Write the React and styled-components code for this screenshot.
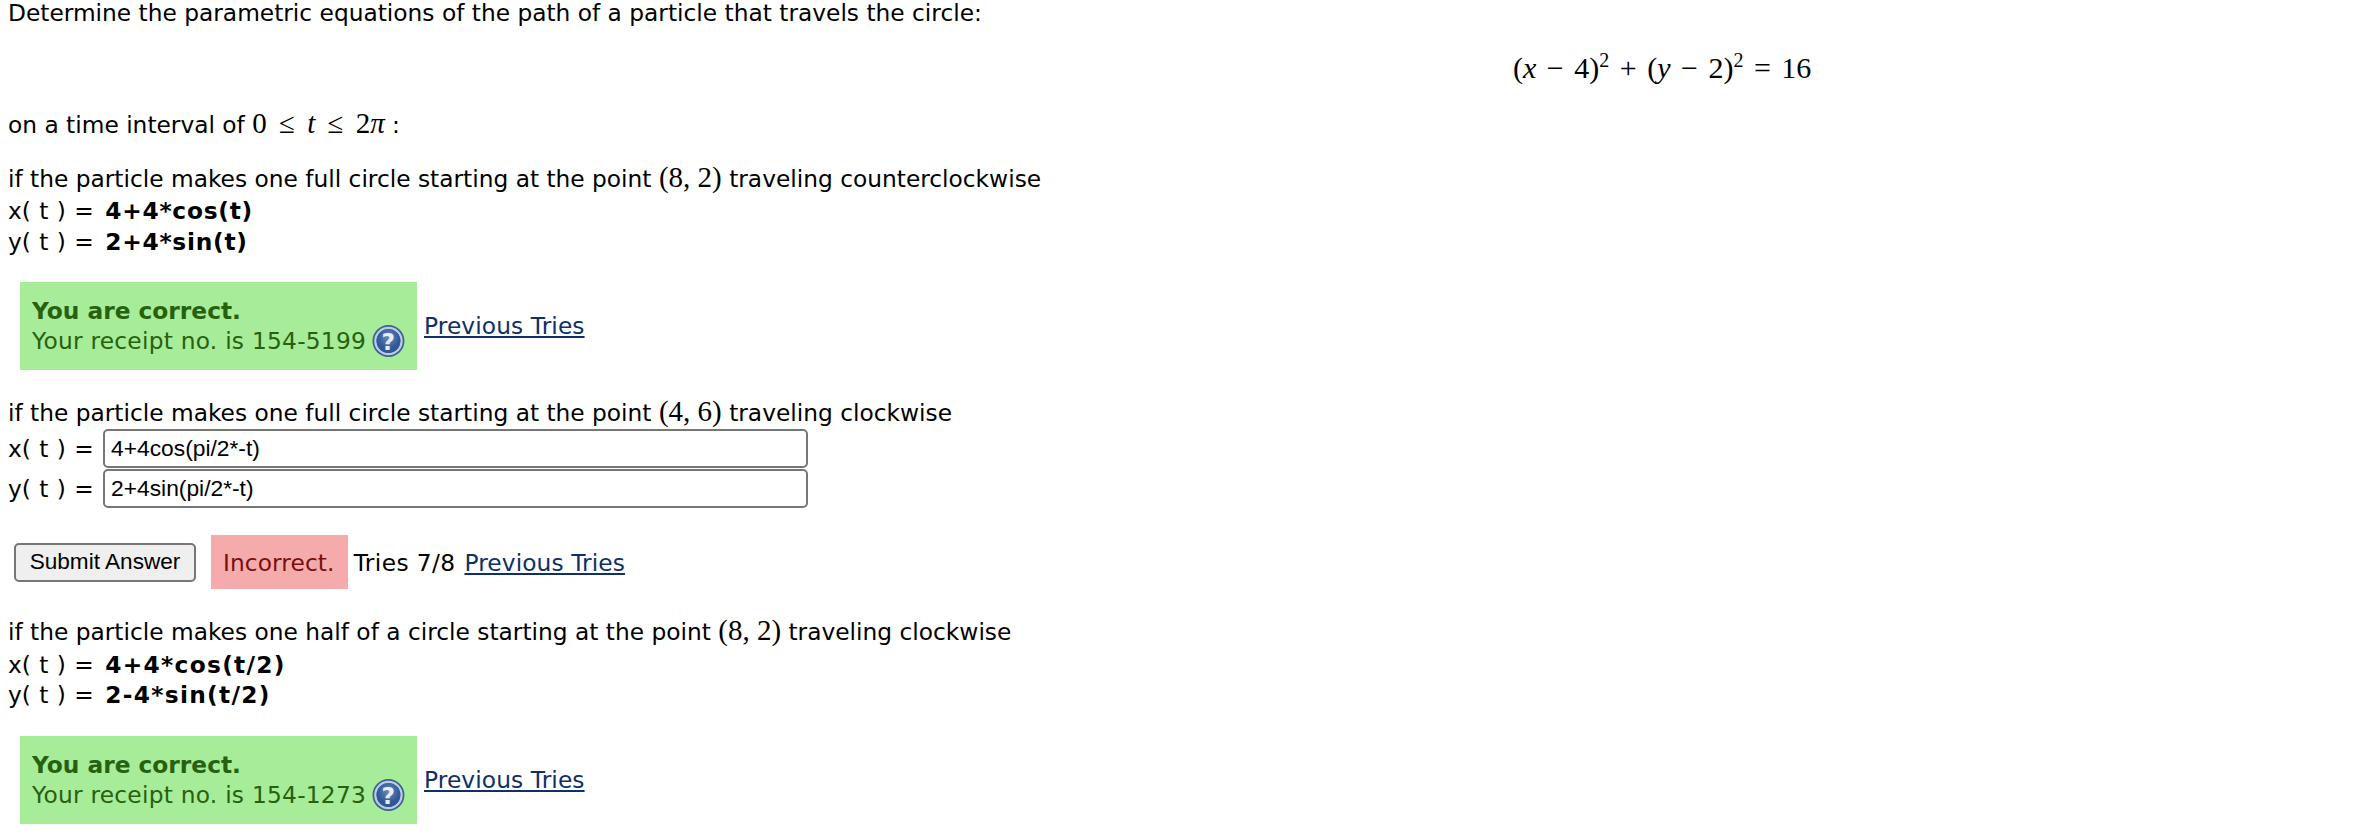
import React from 'react';
import styled, { createGlobalStyle } from 'styled-components';

const GlobalStyle = createGlobalStyle`
  html, body {
    margin: 0;
    padding: 0;
    background: #fff;
  }
  body {
    font-family: "DejaVu Sans", Verdana, sans-serif;
    font-size: 23.3px;
    color: #000;
  }
`;

const Page = styled.div`
  width: 2366px;
  height: 836px;
  padding-left: 8px;
  box-sizing: border-box;
  overflow: hidden;
`;

const Intro = styled.div`
  height: 26px;
  line-height: 26px;
  white-space: nowrap;
`;

const DisplayEquation = styled.div`
  height: 84px;
  line-height: 84px;
  padding-left: 1505px;
  font-family: "Liberation Serif", serif;
  font-size: 30px;
  word-spacing: 3px;
  white-space: nowrap;
`;

const Line = styled.div`
  height: 30px;
  line-height: 30px;
  white-space: nowrap;
  margin-top: ${(p) => p.$top || 0}px;
`;

const Math = styled.span`
  font-family: "Liberation Serif", serif;
  font-size: 29px;
  line-height: 0;
  word-spacing: ${(p) => p.$spread || 0}px;
`;

const Var = styled.i`
  font-family: "Liberation Serif", serif;
`;

const Sup = styled.sup`
  font-size: 20px;
  line-height: 0;
`;

const Answer = styled.b`
  font-weight: 700;
`;

const Formula = styled.span`
  word-spacing: 1px;

  b {
    margin-left: 3px;
    letter-spacing: ${(p) => p.$tracking || 0.75}px;
  }
`;

const FeedbackRow = styled.div`
  display: flex;
  align-items: flex-start;
  margin-top: ${(p) => p.$top}px;
  margin-left: 12px;
`;

const CorrectBox = styled.div`
  width: 397px;
  height: 88px;
  box-sizing: border-box;
  padding: 14px 12px 0;
  background: #a6ec99;
  color: #27610f;
  line-height: 30px;
  white-space: nowrap;
`;

const ReceiptLine = styled.div`
  display: flex;
  align-items: center;
  gap: 6px;
  height: 30px;
  letter-spacing: 0.25px;
`;

const TriesLink = styled.a`
  color: #0f2f66;
  text-decoration: underline;
  letter-spacing: 0.1px;
  cursor: pointer;
`;

const SideLink = styled(TriesLink)`
  margin: 29px 0 0 7px;
  line-height: 30px;
`;

const InputRow = styled.div`
  display: flex;
  align-items: center;
  height: 39px;
  margin-top: ${(p) => p.$top || 0}px;
`;

const Label = styled.span`
  width: 95px;
  word-spacing: 1px;
  white-space: nowrap;
`;

const AnswerInput = styled.input`
  width: 705px;
  height: 39px;
  box-sizing: border-box;
  padding: 1px 6px;
  border: 2px solid #767676;
  border-radius: 5px;
  background: #fff;
  color: #000;
  font-family: "Liberation Sans", Arial, sans-serif;
  font-size: 22.8px;
  outline: none;
`;

const SubmitRow = styled.div`
  display: flex;
  align-items: center;
  height: 54px;
  margin: 27px 0 0 6px;
  white-space: nowrap;
`;

const SubmitButton = styled.button`
  width: 182px;
  height: 39px;
  padding: 0;
  box-sizing: border-box;
  border: 2px solid #767676;
  border-radius: 5px;
  background: #efefef;
  color: #000;
  font-family: "Liberation Sans", Arial, sans-serif;
  font-size: 22.6px;
`;

const IncorrectBox = styled.div`
  display: flex;
  align-items: center;
  height: 54px;
  padding: 0 13px 0 12px;
  margin: 0 6px 0 15px;
  background: #f5abab;
  color: #7a0f0f;
  letter-spacing: 0.1px;
`;

const TriesText = styled.span`
  margin-right: 9px;
  letter-spacing: 0.4px;
`;

function HelpIcon() {
  return (
    <svg width="34" height="34" viewBox="0 0 34 34" aria-hidden="true">
      <defs>
        <radialGradient id="helpFill" cx="50%" cy="35%" r="65%">
          <stop offset="0%" stopColor="#6a8cbc" />
          <stop offset="70%" stopColor="#30599a" />
          <stop offset="100%" stopColor="#2f5690" />
        </radialGradient>
      </defs>
      <circle cx="17" cy="17" r="16.5" fill="#3d6098" />
      <circle cx="17" cy="17" r="13.5" fill="none" stroke="#bccbe0" strokeWidth="2.5" />
      <circle cx="17" cy="17" r="12.3" fill="url(#helpFill)" />
      <text
        x="17"
        y="26"
        textAnchor="middle"
        fontFamily="'DejaVu Sans', sans-serif"
        fontWeight="700"
        fontSize="24"
        fill="#e6edf6"
      >
        ?
      </text>
    </svg>
  );
}

function Correct({ receipt, top }) {
  return (
    <FeedbackRow $top={top}>
      <CorrectBox>
        <Answer>You are correct.</Answer>
        <ReceiptLine>
          Your receipt no. is {receipt}
          <HelpIcon />
        </ReceiptLine>
      </CorrectBox>
      <SideLink>Previous Tries</SideLink>
    </FeedbackRow>
  );
}

export default function App() {
  return (
    <Page>
      <GlobalStyle />
      <Intro>Determine the parametric equations of the path of a particle that travels the circle:</Intro>
      <DisplayEquation>
        (<Var>x</Var> − 4)<Sup>2</Sup> + (<Var>y</Var> − 2)<Sup>2</Sup> = 16
      </DisplayEquation>
      <Line>
        on a time interval of <Math $spread={5}>0 ≤ <Var>t</Var> ≤ 2<Var>π</Var></Math> :
      </Line>

      <Line $top={24}>
        if the particle makes one full circle starting at the point <Math>(8, 2)</Math> traveling counterclockwise
      </Line>
      <Line $top={2}><Formula>x( t ) = <Answer>4+4*cos(t)</Answer></Formula></Line>
      <Line $top={1}><Formula>y( t ) = <Answer>2+4*sin(t)</Answer></Formula></Line>
      <Correct receipt="154-5199" top={25} />

      <Line $top={28}>
        if the particle makes one full circle starting at the point <Math>(4, 6)</Math> traveling clockwise
      </Line>
      <InputRow $top={1}>
        <Label>x( t ) =</Label>
        <AnswerInput readOnly value="4+4cos(pi/2*-t)" />
      </InputRow>
      <InputRow $top={1}>
        <Label>y( t ) =</Label>
        <AnswerInput readOnly value="2+4sin(pi/2*-t)" />
      </InputRow>
      <SubmitRow>
        <SubmitButton type="button">Submit Answer</SubmitButton>
        <IncorrectBox>Incorrect.</IncorrectBox>
        <TriesText>Tries 7/8</TriesText>
        <TriesLink>Previous Tries</TriesLink>
      </SubmitRow>

      <Line $top={28}>
        if the particle makes one half of a circle starting at the point <Math>(8, 2)</Math> traveling clockwise
      </Line>
      <Line $top={3}><Formula $tracking={1.3}>x( t ) = <Answer>4+4*cos(t/2)</Answer></Formula></Line>
      <Line><Formula $tracking={1.3}>y( t ) = <Answer>2-4*sin(t/2)</Answer></Formula></Line>
      <Correct receipt="154-1273" top={26} />
    </Page>
  );
}
